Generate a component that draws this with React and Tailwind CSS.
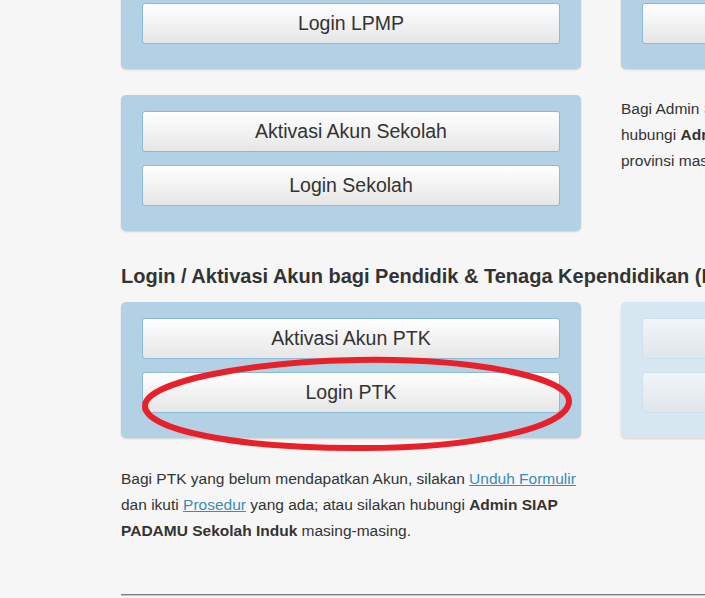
import React from 'react';

function Panel({ children, faded = false }) {
  return (
    <div
      className={`rounded-[5px] px-[21px] pt-4 pb-[25px] flex flex-col gap-[13px] shadow-[0_1px_2px_rgba(0,0,0,0.15)] ${
        faded ? 'bg-[#d7e7f2]' : 'bg-[#b3d1e5]'
      }`}
    >
      {children}
    </div>
  );
}

function Btn({ label, faded = false }) {
  return (
    <button
      className={`h-[41px] w-full rounded-[3px] border pt-[1px] text-[19.5px] text-[#333] bg-gradient-to-b from-white to-[#e6e6e6] ${
        faded ? 'border-[#c5dcec] opacity-60' : 'border-[#8cb9d8]'
      }`}
    >
      {label}
    </button>
  );
}

export default function App() {
  return (
    <div
      className="min-h-[598px] w-[705px] overflow-hidden bg-[#f6f6f6] text-[#333]"
      style={{ fontFamily: '"Liberation Sans", Arial, sans-serif' }}
    >
      <div className="pl-[121px] -mt-[13px] w-[1100px]">
        <div className="flex gap-10">
          <div className="w-[460px] shrink-0">
            <Panel>
              <Btn label="Login LPMP" />
            </Panel>
          </div>
          <div className="w-[460px] shrink-0">
            <Panel>
              <Btn label="Login Dinas" />
            </Panel>
          </div>
        </div>

        <div className="flex gap-10 mt-[26px]">
          <div className="w-[460px] shrink-0">
            <Panel>
              <Btn label="Aktivasi Akun Sekolah" />
              <Btn label="Login Sekolah" />
            </Panel>
          </div>
          <div className="w-[460px] shrink-0 pt-[1px] text-[15.5px] leading-[26px]">
            Bagi Admin Sekolah yang belum mendapatkan Akun, silakan
            <br />
            hubungi <b>Admin SIAP PADAMU Dinas Pendidikan</b> kab/kota atau
            <br />
            provinsi masing-masing.
          </div>
        </div>

        <h2 className="mt-[32px] text-[20px] font-bold leading-[26px] whitespace-nowrap">
          Login / Aktivasi Akun bagi Pendidik &amp; Tenaga Kependidikan (PTK)
        </h2>

        <div className="flex gap-10 mt-[13px]">
          <div className="relative w-[460px] shrink-0">
            <Panel>
              <Btn label="Aktivasi Akun PTK" />
              <Btn label="Login PTK" />
            </Panel>
            <svg
              className="absolute left-[16px] top-[52px] pointer-events-none"
              width="440"
              height="100"
              viewBox="0 0 440 100"
            >
              <path
                d="M 220 6 C 330 4 432 22 432 47 C 432 75 330 95 218 94 C 100 94 8 76 8 52 C 8 28 110 8 220 6 Z"
                fill="none"
                stroke="#e8202a"
                strokeWidth="6"
              />
            </svg>
          </div>
          <div className="w-[460px] shrink-0">
            <Panel faded>
              <Btn label="Aktivasi Akun Pendamping" faded />
              <Btn label="Login Pendamping" faded />
            </Panel>
          </div>
        </div>

        <p className="mt-[28px] w-[470px] text-[15.5px] leading-[26px]">
          Bagi PTK yang belum mendapatkan Akun, silakan{' '}
          <a href="#" className="text-[#3a8cb8] underline">Unduh Formulir</a>
          <br />
          dan ikuti{' '}
          <a href="#" className="text-[#3a8cb8] underline">Prosedur</a> yang ada; atau silakan hubungi{' '}
          <b>Admin SIAP</b>
          <br />
          <b>PADAMU Sekolah Induk</b> masing-masing.
        </p>

        <div className="mt-[50px] h-[2px] border-t border-[#7d7d7d] bg-[#c8c8c8]" />
      </div>
    </div>
  );
}
